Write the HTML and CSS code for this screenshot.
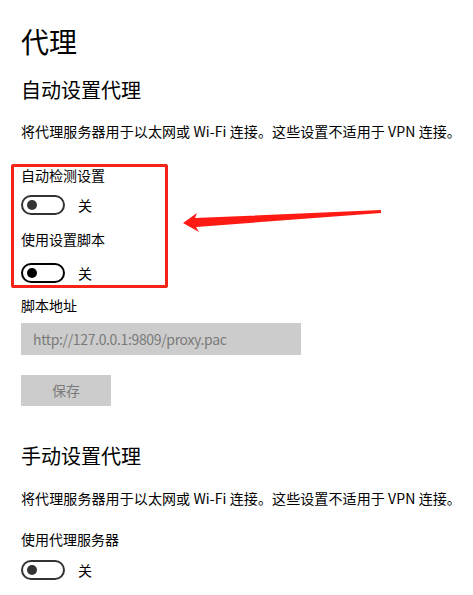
FILE: index.html
```html
<!DOCTYPE html>
<html lang="zh-CN">
<head>
<meta charset="utf-8">
<title>代理</title>
<link rel="stylesheet" href="styles.css">
</head>
<body>
<main class="page">
  <h1 class="title">代理</h1>

  <h2 class="section-title">自动设置代理</h2>
  <p class="desc">将代理服务器用于以太网或 Wi-Fi 连接。这些设置不适用于 VPN 连接。</p>

  <div class="highlight">
    <div class="setting">
      <div class="label label-first">自动检测设置</div>
      <div class="toggle-row">
        <span class="toggle toggle-soft"><span class="knob"></span></span>
        <span class="state">关</span>
      </div>
    </div>
    <div class="setting setting-second">
      <div class="label">使用设置脚本</div>
      <div class="toggle-row toggle-row-second">
        <span class="toggle"><span class="knob"></span></span>
        <span class="state">关</span>
      </div>
    </div>
  </div>

  <div class="label label-addr">脚本地址</div>
  <div class="input">http://127.0.0.1:9809/proxy.pac</div>
  <div class="button">保存</div>

  <h2 class="section-title section-manual">手动设置代理</h2>
  <p class="desc desc-manual">将代理服务器用于以太网或 Wi-Fi 连接。这些设置不适用于 VPN 连接。</p>

  <div class="label label-proxy">使用代理服务器</div>
  <div class="toggle-row toggle-row-proxy">
    <span class="toggle toggle-soft"><span class="knob"></span></span>
    <span class="state">关</span>
  </div>

  <svg class="arrow" width="473" height="595" viewBox="0 0 473 595" aria-hidden="true">
    <polygon points="183,223 197,213 195,218 381,210 381,213 196,227 199,232" fill="#ff1a14"/>
  </svg>
</main>
</body>
</html>
```

FILE: styles.css
```css
html, body {
  margin: 0;
  padding: 0;
  background: #ffffff;
}

body {
  font-family: "Noto Sans CJK SC", "Noto Sans", sans-serif;
  color: #000000;
}

.page {
  position: relative;
  width: 473px;
  height: 595px;
  box-sizing: border-box;
  padding: 21px 0 0 21px;
  overflow: hidden;
}

.title {
  margin: 0;
  font-size: 28px;
  line-height: 40px;
  font-weight: 400;
}

.section-title {
  margin: 15px 0 0;
  font-size: 20px;
  line-height: 28px;
  font-weight: 400;
}

.desc {
  margin: 17px 0 0;
  font-size: 14px;
  line-height: 20px;
  letter-spacing: 0.1px;
  white-space: nowrap;
}

.highlight {
  margin: 23px 0 0 -10px;
  width: 157px;
  height: 124px;
  box-sizing: border-box;
  border: 3px solid #f52318;
  border-radius: 2px;
  padding: 0 0 0 7px;
}

.label {
  font-size: 14px;
  line-height: 20px;
}

.label-first {
  margin-top: -2px;
}

.toggle-row {
  display: flex;
  align-items: center;
  gap: 13px;
  margin-top: 10px;
  height: 20px;
}

.setting-second {
  margin-top: 14px;
}

.toggle-row-second {
  margin-top: 14px;
}

.toggle {
  width: 44px;
  height: 20px;
  box-sizing: border-box;
  border: 2px solid #000000;
  border-radius: 10px;
  display: flex;
  align-items: center;
  padding-left: 4px;
}

.toggle-soft {
  border-color: #333333;
}

.knob {
  width: 10px;
  height: 10px;
  border-radius: 50%;
  background: #000000;
}

.toggle-soft .knob {
  background: #333333;
}

.state {
  font-size: 14px;
  line-height: 20px;
}

.label-addr {
  margin-top: 7px;
}

.input {
  margin-top: 8px;
  width: 280px;
  height: 32px;
  box-sizing: border-box;
  background: #cccccc;
  color: #7a7a7a;
  font-size: 14px;
  line-height: 32px;
  letter-spacing: -0.35px;
  padding-left: 12px;
}

.button {
  margin-top: 20px;
  width: 90px;
  height: 31px;
  background: #cccccc;
  color: #7a7a7a;
  font-size: 14px;
  line-height: 31px;
  text-align: center;
}

.section-manual {
  margin-top: 36px;
}

.desc-manual {
  margin-top: 18px;
}

.label-proxy {
  margin-top: 21px;
}

.toggle-row-proxy {
  margin-top: 11px;
}

.arrow {
  position: absolute;
  left: 0;
  top: 0;
  pointer-events: none;
}
```
